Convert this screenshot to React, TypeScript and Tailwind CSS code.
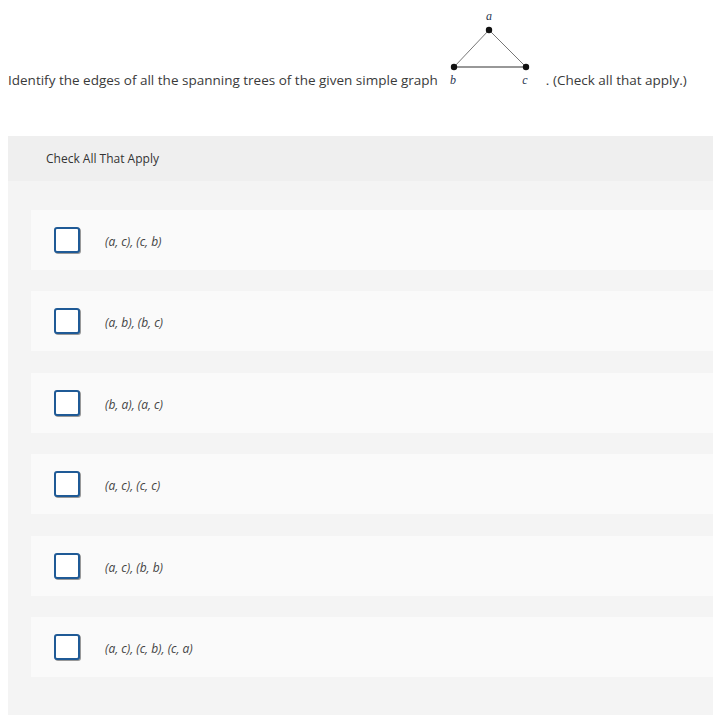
import React from 'react'

const OPTIONS = [
  ['a', 'c', 'c', 'b'],
  ['a', 'b', 'b', 'c'],
  ['b', 'a', 'a', 'c'],
  ['a', 'c', 'c', 'c'],
  ['a', 'c', 'b', 'b'],
  ['a', 'c', 'c', 'b', 'c', 'a'],
]

function Graph() {
  return (
    <svg width="100" height="82" viewBox="0 0 100 82" className="inline-block align-[-3px] ml-[6px] mr-[2px]">
      <line x1="45" y1="24" x2="10" y2="61" stroke="#777" strokeWidth="1" />
      <line x1="45" y1="24" x2="82" y2="61" stroke="#777" strokeWidth="1" />
      <line x1="10" y1="61" x2="82" y2="61" stroke="#333" strokeWidth="1.2" />
      <circle cx="45" cy="24" r="3.2" fill="#111" />
      <circle cx="10" cy="61" r="3.2" fill="#111" />
      <circle cx="82" cy="61" r="3.2" fill="#111" />
      <g textAnchor="middle" fill="#2a3550" className="font-['Liberation_Serif',serif] italic text-[12px]">
        <text x="45" y="14">a</text>
        <text x="9" y="78">b</text>
        <text x="81" y="78">c</text>
      </g>
    </svg>
  )
}

function Label({ pairs }: { pairs: string[] }) {
  const items = []
  for (let i = 0; i < pairs.length; i += 2) {
    items.push(`(${pairs[i]}, ${pairs[i + 1]})`)
  }
  return <span className="italic text-[12px] text-[#444]">{items.join(', ')}</span>
}

export default function App() {
  return (
    <div className="w-[713px] h-[715px] bg-white overflow-hidden font-['Open_Sans',sans-serif] text-[#3a3a3a]">
      {/* Question */}
      <div className="h-[136px] pt-[6px] pl-[8px] text-[13.5px] leading-[16px] whitespace-nowrap">
        Identify the edges of all the spanning trees of the given simple graph
        <Graph />
        . (Check all that apply.)
      </div>

      {/* Answer panel */}
      <div className="ml-[8px]">
        <div className="h-[45px] bg-[#efefef] flex items-center pl-[38px] text-[12px] text-[#333]">
          Check All That Apply
        </div>
        <div className="bg-[#f4f4f4] pl-[23px] pt-[29px] pb-[38px] flex flex-col gap-[21.4px]">
          {OPTIONS.map((o, i) => (
            <div key={i} className="h-[60px] bg-[#fafafa] flex items-center pl-[23px]">
              <div className="w-[26px] h-[26px] rounded-[3px] bg-white border-2 border-[#1f5a96] shadow-[1px_1px_0_#999]" />
              <div className="ml-[25px]">
                <Label pairs={o} />
              </div>
            </div>
          ))}
        </div>
      </div>
    </div>
  )
}
